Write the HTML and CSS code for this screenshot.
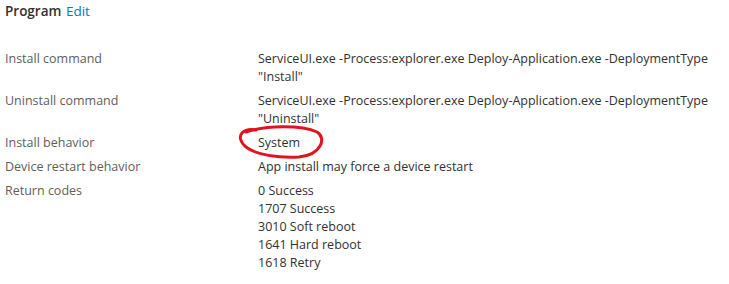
FILE: index.html
```html
<!DOCTYPE html>
<html lang="en">
<head>
    <meta charset="UTF-8">
    <title>Program</title>
    <link rel="stylesheet" href="styles.css">
</head>
<body>
    <div class="section">
        <h2 class="section-title">Program <a href="#" class="edit-link">Edit</a></h2>

        <div class="props">
            <div class="prop-row">
                <div class="prop-label">Install command</div>
                <div class="prop-value">ServiceUI.exe -Process:explorer.exe Deploy-Application.exe -DeploymentType "Install"</div>
            </div>
            <div class="prop-row">
                <div class="prop-label">Uninstall command</div>
                <div class="prop-value">ServiceUI.exe -Process:explorer.exe Deploy-Application.exe -DeploymentType "Uninstall"</div>
            </div>
            <div class="prop-row">
                <div class="prop-label">Install behavior</div>
                <div class="prop-value">
                    <span class="marked">System
                        <svg class="scribble" viewBox="0 0 86 36" width="86" height="36">
                            <path d="M8 8 C 28 1, 64 1, 79 8 C 89 14, 83 31, 61 33 C 40 34, 18 31, 8 23 C 2 18, 1 12, 4 9 C 7 6, 12 5, 18 6" fill="none" stroke="#e0141e" stroke-width="3" stroke-linecap="round"/>
                        </svg>
                    </span>
                </div>
            </div>
            <div class="prop-row">
                <div class="prop-label">Device restart behavior</div>
                <div class="prop-value">App install may force a device restart</div>
            </div>
            <div class="prop-row">
                <div class="prop-label">Return codes</div>
                <div class="prop-value">
                    <div>0 Success</div>
                    <div>1707 Success</div>
                    <div>3010 Soft reboot</div>
                    <div>1641 Hard reboot</div>
                    <div>1618 Retry</div>
                </div>
            </div>
        </div>
    </div>
</body>
</html>
```

FILE: styles.css
```css
body {
    margin: 0;
    background-color: #fff;
    font-family: "Open Sans", "Noto Sans", sans-serif;
    font-size: 12.5px;
    color: #323130;
}
.section {
    padding: 1px 5px;
}
.section-title {
    margin: 0;
    font-size: 13.5px;
    font-weight: 600;
    line-height: 20px;
    color: #323130;
}
.edit-link {
    color: #0078d4;
    font-weight: 400;
    text-decoration: none;
    margin-left: 1px;
}
.props {
    margin-top: 26px;
}
.prop-row {
    display: grid;
    grid-template-columns: 253px 1fr;
    padding: 3px 0;
    line-height: 18px;
}
.prop-label {
    color: #605e5c;
}
.prop-value {
    padding-right: 12px;
}
.marked {
    position: relative;
}
.scribble {
    position: absolute;
    left: -20px;
    top: -10px;
}
```
